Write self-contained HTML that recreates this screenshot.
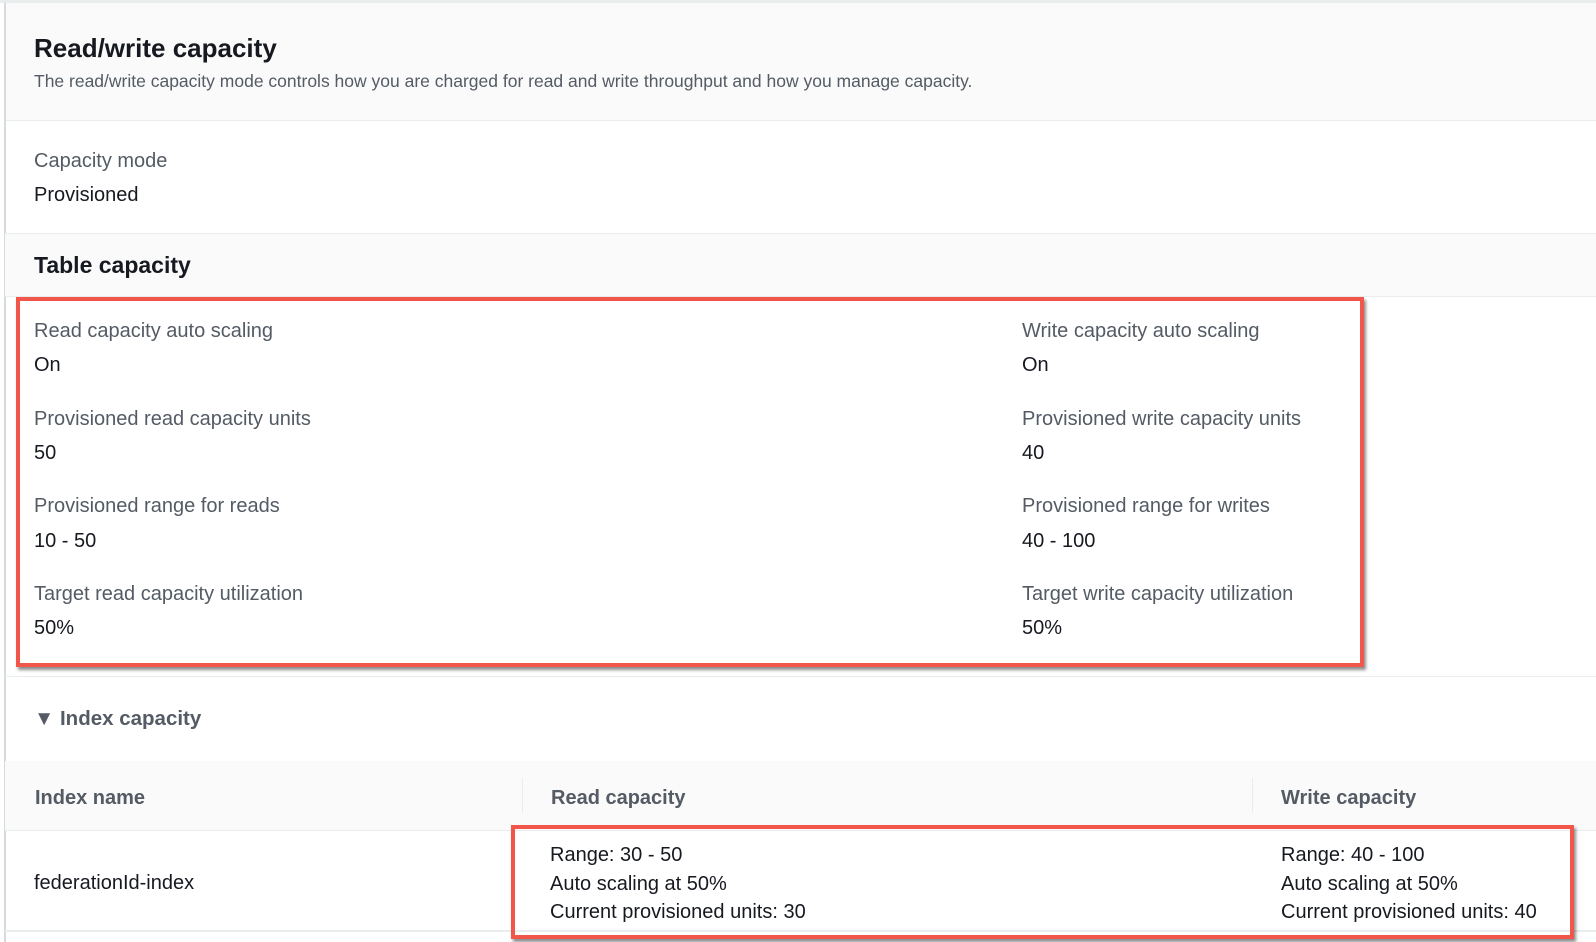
<!DOCTYPE html>
<html><head><meta charset="utf-8"><style>
body{margin:0;width:1596px;height:942px;background:#fff;font-family:"Liberation Sans",sans-serif;position:relative;overflow:hidden;color:#16191f}
.a{position:absolute;white-space:nowrap}
.lbl{color:#545b64;font-size:20px}
.val{color:#16191f;font-size:20px}
.red{position:absolute;border:4px solid #f2554a;box-shadow:2px 3px 3px rgba(0,0,0,.45)}
</style></head><body>
<div class="a" style="left:0;top:0;width:1596px;height:3px;background:#eaeded"></div>
<div class="a" style="left:5px;top:3px;width:1591px;height:117px;background:#fafafa;border-bottom:1px solid #eaeded"></div>
<div class="a" style="left:4px;top:3px;width:2px;height:939px;background:#d5dbdb"></div>
<div class="a" style="left:34px;top:33px;font-size:26px;font-weight:bold">Read/write capacity</div>
<div class="a" style="left:34px;top:71px;font-size:17.5px;color:#545b64">The read/write capacity mode controls how you are charged for read and write throughput and how you manage capacity.</div>
<div class="a lbl" style="left:34px;top:150px">Capacity mode</div>
<div class="a val" style="left:34px;top:184px">Provisioned</div>
<div class="a" style="left:5px;top:233px;width:1591px;height:62px;background:#fafafa;border-top:1px solid #eaeded;border-bottom:1px solid #eaeded"></div>
<div class="a" style="left:34px;top:252px;font-size:23px;font-weight:bold">Table capacity</div>
<div class="red" style="left:16px;top:297px;width:1340px;height:362px"></div>
<div class="a lbl" style="left:34px;top:320px">Read capacity auto scaling</div><div class="a val" style="left:34px;top:354px">On</div>
<div class="a lbl" style="left:34px;top:408px">Provisioned read capacity units</div><div class="a val" style="left:34px;top:442px">50</div>
<div class="a lbl" style="left:34px;top:495px">Provisioned range for reads</div><div class="a val" style="left:34px;top:530px">10 - 50</div>
<div class="a lbl" style="left:34px;top:583px">Target read capacity utilization</div><div class="a val" style="left:34px;top:617px">50%</div>
<div class="a lbl" style="left:1022px;top:320px">Write capacity auto scaling</div><div class="a val" style="left:1022px;top:354px">On</div>
<div class="a lbl" style="left:1022px;top:408px">Provisioned write capacity units</div><div class="a val" style="left:1022px;top:442px">40</div>
<div class="a lbl" style="left:1022px;top:495px">Provisioned range for writes</div><div class="a val" style="left:1022px;top:530px">40 - 100</div>
<div class="a lbl" style="left:1022px;top:583px">Target write capacity utilization</div><div class="a val" style="left:1022px;top:617px">50%</div>
<div class="a" style="left:5px;top:676px;width:1591px;height:1px;background:#eaeded"></div>
<div class="a" style="left:34px;top:707px;font-size:20.5px;font-weight:bold;color:#545b64">▼ Index capacity</div>
<div class="a" style="left:5px;top:761px;width:1591px;height:69px;background:#fafafa;border-bottom:1px solid #eaeded"></div>
<div class="a" style="left:522px;top:778px;width:1px;height:35px;background:#eaeded"></div>
<div class="a" style="left:1252px;top:778px;width:1px;height:35px;background:#eaeded"></div>
<div class="a" style="left:35px;top:787px;font-size:20px;font-weight:bold;color:#545b64">Index name</div>
<div class="a" style="left:551px;top:787px;font-size:20px;font-weight:bold;color:#545b64">Read capacity</div>
<div class="a" style="left:1281px;top:787px;font-size:20px;font-weight:bold;color:#545b64">Write capacity</div>
<div class="a" style="left:5px;top:930px;width:1591px;height:2px;background:#eaeded"></div>
<div class="a val" style="left:34px;top:872px">federationId-index</div>
<div class="red" style="left:511px;top:825px;width:1055px;height:106px"></div>
<div class="a val" style="left:550px;top:841px;line-height:28.5px">Range: 30 - 50<br>Auto scaling at 50%<br>Current provisioned units: 30</div>
<div class="a val" style="left:1281px;top:841px;line-height:28.5px">Range: 40 - 100<br>Auto scaling at 50%<br>Current provisioned units: 40</div>
</body></html>
